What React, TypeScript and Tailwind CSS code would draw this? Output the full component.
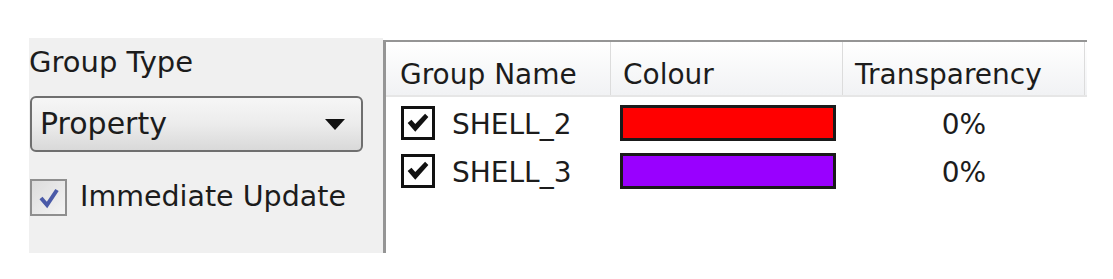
import React from 'react';

const FONT = { fontFamily: '"DejaVu Sans", "Noto Sans", sans-serif' };

const rows = [
  { name: 'SHELL_2', colour: '#ff0000', transparency: '0%' },
  { name: 'SHELL_3', colour: '#9900ff', transparency: '0%' },
];

const BlackCheck = () => (
  <div className="w-[34px] h-[34px] border-[3px] border-[#111] bg-white flex items-center justify-center shrink-0">
    <svg width="24" height="22" viewBox="0 0 22 20">
      <path d="M1.5 10 L5 7 L8.5 11 L17.5 1.5 L20.5 4.5 L8.5 18 Z" fill="#111" />
    </svg>
  </div>
);

const App: React.FC = () => {
  return (
    <div className="w-[1113px] h-[279px] bg-white pt-[38px] pl-[29px] flex text-[#1c1c1c]" style={FONT}>
      {/* left options panel */}
      <div className="w-[354px] h-[215px] bg-[#f0f0f0] flex flex-col">
        <div className="text-[29px] leading-none mt-[10px]">Group Type</div>

        <div className="mt-[19px] ml-[1px] w-[333px] h-[56px] rounded-[6px] border-2 border-[#6f6f6f] bg-gradient-to-b from-[#f6f6f6] via-[#ececec] to-[#d9d9d9] flex items-center justify-between pl-[8px] pr-[16px]">
          <span className="text-[30px] leading-none">Property</span>
          <svg width="20" height="11" viewBox="0 0 20 11">
            <path d="M0 0 H20 L10 11 Z" fill="#111" />
          </svg>
        </div>

        <div className="mt-[27px] ml-[1px] flex items-center gap-[13px]">
          <div className="w-[37px] h-[37px] border-2 border-[#8f8f8f] bg-gradient-to-br from-[#dcdcdc] to-[#f4f4f4] flex items-center justify-center">
            <svg width="24" height="24" viewBox="0 0 24 24">
              <path d="M4 12 L10 19 L20 4" fill="none" stroke="#4a5aa8" strokeWidth="4" />
            </svg>
          </div>
          <span className="text-[28.5px] leading-none">Immediate Update</span>
        </div>
      </div>

      {/* right group table */}
      <div className="w-[704px] h-[213px] mt-[2px] border-l-[3px] border-t-2 border-[#959595] bg-white flex flex-col">
        <div className="h-[55px] flex bg-gradient-to-b from-white to-[#f1f2f4] border-b-2 border-[#e6e6e6] text-[28px] leading-none">
          <div className="w-[225px] flex items-end pb-[6px] pl-[14px] border-r border-[#dcdcdc]">Group Name</div>
          <div className="w-[232px] flex items-end pb-[6px] pl-[12px] border-r border-[#dcdcdc]">Colour</div>
          <div className="w-[242px] flex items-end pb-[6px] pl-[12px] border-r border-[#dcdcdc]">Transparency</div>
        </div>

        <div className="flex flex-col pt-[8px] gap-[12px]">
          {rows.map((r) => (
            <div key={r.name} className="flex items-center h-[36px] text-[28px] leading-none">
              <div className="w-[225px] flex items-center pl-[15px] gap-[17px]">
                <BlackCheck />
                <span className="pt-[3px]">{r.name}</span>
              </div>
              <div className="w-[232px] pl-[9px]">
                <div className="w-[216px] h-[36px] border-[3px] border-[#1a1a1a]" style={{ backgroundColor: r.colour }} />
              </div>
              <div className="w-[242px] text-center pt-[3px]">{r.transparency}</div>
            </div>
          ))}
        </div>
      </div>
    </div>
  );
};

export default App;
